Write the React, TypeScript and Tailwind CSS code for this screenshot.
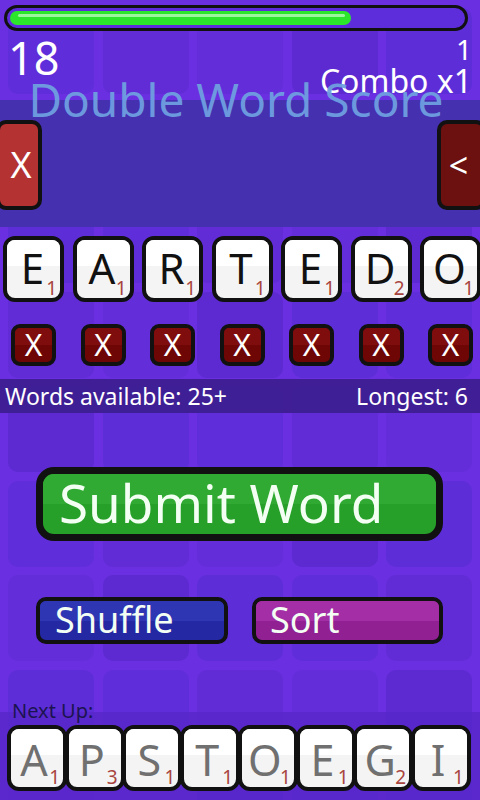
import React from 'react';

const font = { fontFamily: '"Noto Sans", "Open Sans", sans-serif' };

const rack = [
    { l: 'E', v: 1 },
    { l: 'A', v: 1 },
    { l: 'R', v: 1 },
    { l: 'T', v: 1 },
    { l: 'E', v: 1 },
    { l: 'D', v: 2 },
    { l: 'O', v: 1 },
];

const nextUp = [
    { l: 'A', v: 1 },
    { l: 'P', v: 3 },
    { l: 'S', v: 1 },
    { l: 'T', v: 1 },
    { l: 'O', v: 1 },
    { l: 'E', v: 1 },
    { l: 'G', v: 2 },
    { l: 'I', v: 1 },
];

const shades = [
    'bg-[#5f2dd9]',
    'bg-[#632ed9]',
    'bg-[#5d2ed8]',
    'bg-[#612cd6]',
    'bg-[#5c2ad0]',
];

function BackgroundGrid() {
    const cells = Array.from({ length: 45 });
    return (
        <div className="absolute inset-0 grid grid-cols-5 gap-[8.5px] px-[8px] pt-[8px]">
            {cells.map((_, i) => (
                <div
                    key={i}
                    className={`h-[86px] rounded-[10px] ${shades[(i * 3 + Math.floor(i / 5)) % 5]}`}
                />
            ))}
        </div>
    );
}

function Tile({ letter, value, small }: { letter: string; value: number; small?: boolean }) {
    return (
        <div
            className={
                small
                    ? 'relative h-[66px] w-[60px] shrink-0 overflow-hidden rounded-[12px] border-[4px] border-[#111] bg-[#f4f4f4] -mr-[2.3px]'
                    : 'relative h-[66px] w-[61px] shrink-0 overflow-hidden rounded-[12px] border-[4px] border-[#111] bg-[#f4f4f4]'
            }
        >
            <div className="absolute inset-x-0 top-0 h-[45%] bg-white" />
            <div
                className={
                    small
                        ? 'relative flex h-full items-center justify-center pr-[6px] pt-[2px] text-[43px] leading-none text-[#707070]'
                        : 'relative flex h-full items-center justify-center pr-[2px] pb-[2px] text-[42px] leading-none text-[#111]'
                }
            >
                {letter}
            </div>
            <span className="absolute bottom-[0px] right-[3px] text-[19px] leading-none text-[#a8443f]">
                {value}
            </span>
        </div>
    );
}

function RemoveButton() {
    return (
        <div className="relative flex h-[42px] w-[45px] shrink-0 items-center justify-center overflow-hidden rounded-[9px] border-[4px] border-[#111] bg-[#6e0606]">
            <div className="absolute inset-x-0 top-0 h-1/2 bg-[#800d0d]" />
            <span className="relative text-[30px] leading-none text-white">X</span>
        </div>
    );
}

function GlossButton({
    label,
    top,
    bottom,
    className,
    textClass,
}: {
    label: string;
    top: string;
    bottom: string;
    className: string;
    textClass: string;
}) {
    return (
        <div className={`relative overflow-hidden border-[#111] ${bottom} ${className}`}>
            <div className={`absolute inset-x-0 top-0 h-1/2 ${top}`} />
            <span className={`relative leading-none text-[#f4fff4] ${textClass}`}>{label}</span>
        </div>
    );
}

export default function App() {
    return (
        <div className="relative h-[800px] w-[480px] overflow-hidden bg-[#6a2fe0]" style={font}>
            <BackgroundGrid />

            <div className="relative flex h-full flex-col">
                {/* progress */}
                <div className="ml-[4px] mr-[12px] mt-[5px] h-[26px] shrink-0 overflow-hidden rounded-full border-[3px] border-[#111] bg-[#5e2ddb] p-[3px]">
                    <div className="relative h-full w-[75.4%] rounded-full bg-[#2ce62c]">
                        <div className="absolute left-[8px] right-[6px] top-[3px] h-[3px] rounded-full bg-[#9cf79c]" />
                    </div>
                </div>

                {/* score row */}
                <div className="flex h-[69px] shrink-0 justify-between pl-[8px] pr-[8px]">
                    <span className="mt-[4px] text-[45px] leading-none text-white">18</span>
                    <div className="flex flex-col items-end text-white">
                        <span className="mt-[4px] text-[28px] leading-none">1</span>
                        <span className="mt-[2px] text-[32px] leading-none">Combo x1</span>
                    </div>
                </div>

                {/* word area */}
                <div className="relative flex h-[127px] shrink-0 justify-between bg-[#4530b0]">
                    <span className="absolute left-0 right-0 top-[-24px] pr-[8px] text-center text-[46px] leading-none text-[#6f9fe0] opacity-95">
                        Double Word Score
                    </span>
                    <div className="ml-[-4px] mt-[20px] flex h-[90px] w-[46px] items-center justify-center rounded-[10px] border-[4px] border-[#111] bg-[#b53232] pl-[4px]">
                        <span className="text-[36px] leading-none text-white">X</span>
                    </div>
                    <div className="mr-[-6px] mt-[20px] flex h-[90px] w-[49px] items-center justify-center rounded-[10px] border-[4px] border-[#111] bg-[#6c1010] pr-[6px]">
                        <span className="text-[34px] leading-none text-white">&lt;</span>
                    </div>
                </div>

                {/* rack */}
                <div className="ml-[3px] mt-[9px] flex shrink-0 gap-[8.5px]">
                    {rack.map((t, i) => (
                        <Tile key={i} letter={t.l} value={t.v} />
                    ))}
                </div>

                <div className="ml-[11px] mt-[22px] flex shrink-0 gap-[24.5px]">
                    {rack.map((_, i) => (
                        <RemoveButton key={i} />
                    ))}
                </div>

                {/* info */}
                <div className="mt-[13px] flex h-[34px] shrink-0 items-center justify-between bg-[#3c1e8e]/90 pl-[5px] pr-[12px] text-[23px] text-white">
                    <span>Words available: 25+</span>
                    <span>Longest: 6</span>
                </div>

                <GlossButton
                    label="Submit Word"
                    top="bg-[#30aa32]"
                    bottom="bg-[#27a029]"
                    className="ml-[36px] mt-[54px] flex h-[74px] w-[407px] shrink-0 items-center rounded-[18px] border-[7px] pl-[16px]"
                    textClass="-translate-y-[2px] text-[53px]"
                />

                <div className="ml-[36px] mt-[56px] flex shrink-0 gap-[24px]">
                    <GlossButton
                        label="Shuffle"
                        top="bg-[#2f36b4]"
                        bottom="bg-[#2428a2]"
                        className="flex h-[47px] w-[192px] items-center rounded-[10px] border-[4px] pl-[15px]"
                        textClass="-translate-y-[1px] text-[36px]"
                    />
                    <GlossButton
                        label="Sort"
                        top="bg-[#a42ea6]"
                        bottom="bg-[#912092]"
                        className="flex h-[47px] w-[191px] items-center rounded-[10px] border-[4px] pl-[14px]"
                        textClass="-translate-y-[1px] text-[36px]"
                    />
                </div>

                {/* next up */}
                <div className="mt-[68px] flex flex-1 flex-col bg-[#5727c9]/80">
                    <span className="-mt-[14px] ml-[12px] text-[20px] leading-[26px] text-[#1c1450]">Next Up:</span>
                    <div className="ml-[7px] mt-[1px] flex">
                        {nextUp.map((t, i) => (
                            <Tile key={i} letter={t.l} value={t.v} small />
                        ))}
                    </div>
                </div>
            </div>
        </div>
    );
}
